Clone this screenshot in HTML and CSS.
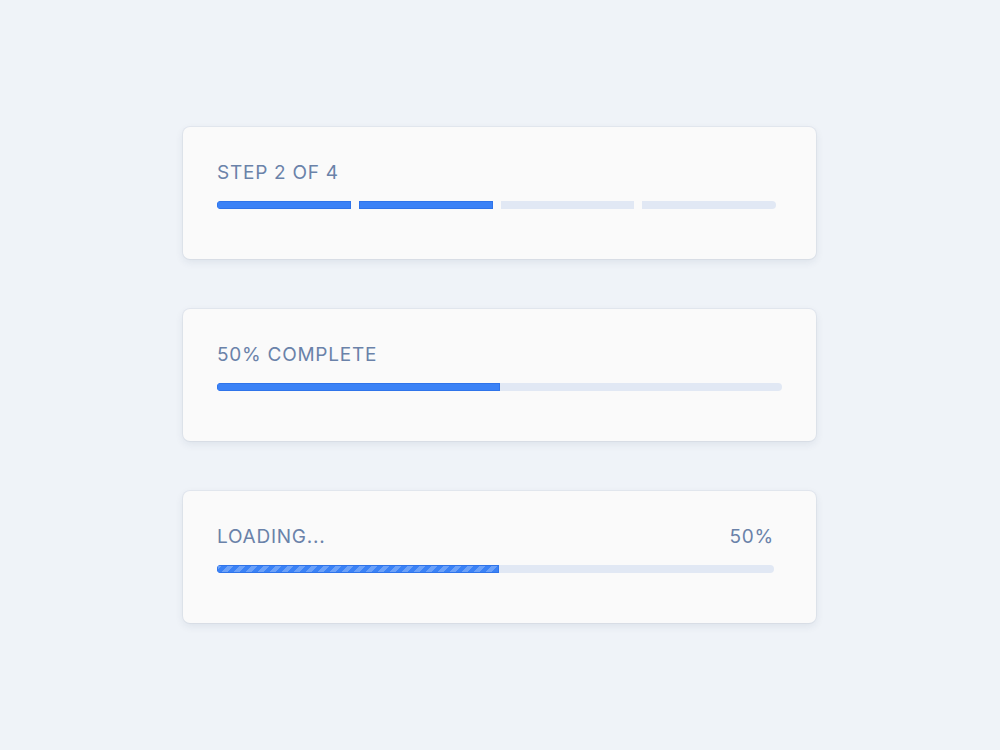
FILE: index.html
```html
<!DOCTYPE html>
<html lang="en">
<head>
  <meta charset="UTF-8" />
  <meta name="viewport" content="width=device-width, initial-scale=1" />
  <title>Progress Bars</title>
  <link rel="stylesheet" href="styles.css">
</head>
<body>

  <main class="stack">

    <section class="card">
      <p class="label">Step 2 of 4</p>
      <div class="steps">
        <span class="step done"></span>
        <span class="step done"></span>
        <span class="step"></span>
        <span class="step"></span>
      </div>
    </section>

    <section class="card">
      <p class="label">50% Complete</p>
      <div class="track">
        <div class="fill" style="width: 50%;"></div>
      </div>
    </section>

    <section class="card">
      <div class="label-row">
        <p class="label">Loading...</p>
        <p class="label">50%</p>
      </div>
      <div class="track narrow">
        <div class="fill striped" style="width: 282px;"></div>
      </div>
    </section>

  </main>

</body>
</html>
```

FILE: styles.css
```css
body {
  font-family: Inter, 'Noto Sans', sans-serif;
  margin: 0;
  padding: 0 1px 0 0;
  background: #eff3f8;
  color: #6f86ab;
  min-height: 100vh;
  display: flex;
  align-items: center;
  justify-content: center;
}

.stack {
  display: flex;
  flex-direction: column;
  gap: 50px;
  width: 633px;
}

.card {
  background: #fafafa;
  border-radius: 7px;
  padding: 34px 34px 50px;
  box-shadow: 0 0 0 1px rgba(30, 50, 90, 0.05), 0 3px 8px rgba(30, 50, 90, 0.09);
}

.label {
  margin: 0 0 17px;
  font-size: 19px;
  line-height: 23px;
  letter-spacing: 0.75px;
  text-transform: uppercase;
  color: #6a82a9;
}

.label-row {
  display: flex;
  justify-content: space-between;
  margin-right: 8px;
}

.steps {
  display: flex;
  height: 8px;
  border-radius: 4px;
  overflow: hidden;
  margin-right: 6px;
}

.step {
  flex: 1;
  margin-right: 8px;
  background: #e1e8f4;
}

.step:last-child {
  margin-right: 0;
}

.step.done {
  background: #3b82f6;
  box-shadow: inset 0 0 0 1px #2f74ea;
}

.track {
  height: 8px;
  border-radius: 4px;
  background: #e1e8f4;
  overflow: hidden;
}

.track.narrow {
  margin-right: 8px;
}

.fill {
  height: 100%;
  background: #3b82f6;
  box-shadow: inset 0 0 0 1px #2f74ea;
}

.fill.striped {
  background-color: #3b82f6;
  background-image: linear-gradient(135deg,
    rgba(255, 255, 255, 0.25) 25%, transparent 25%,
    transparent 50%, rgba(255, 255, 255, 0.25) 50%,
    rgba(255, 255, 255, 0.25) 75%, transparent 75%, transparent);
  background-size: 12px 12px;
}
```
